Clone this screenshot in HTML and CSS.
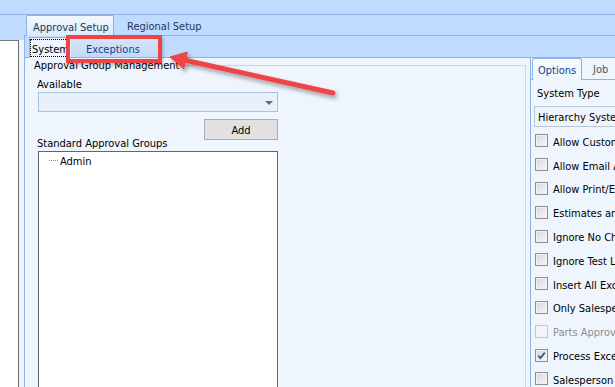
FILE: index.html
```html
<!DOCTYPE html>
<html lang="en">
<head>
    <meta charset="UTF-8">
    <meta name="viewport" content="width=device-width, initial-scale=1.0">
    <title>Approval Setup</title>
    <link rel="stylesheet" href="styles.css">
</head>
<body>
    <div class="topbar"></div>
    <div class="workspace">
        <div class="navside">
            <div class="navside-gap"></div>
            <div class="navside-body">
                <div class="navbox"></div>
            </div>
        </div>

        <div class="maintabs">
            <div class="tabstrip">
                <div class="tab tab-active">Approval Setup</div>
                <div class="tab">Regional Setup</div>
            </div>
            <div class="tabpage">
                <div class="subtabstrip">
                    <div class="subtab subtab-active"><span class="focus">System</span></div>
                    <div class="subtab subtab-hot">Exceptions</div>
                </div>
                <div class="pagebody">
                    <fieldset class="groupbox">
                        <legend>Approval Group Management</legend>
                        <div class="groupbody">
                            <div class="label label-first">Available</div>
                            <div class="combo">
                                <span class="combo-arrow"></span>
                            </div>
                            <div class="addrow">
                                <div class="label label-groups">Standard Approval Groups</div>
                                <button class="btn">Add</button>
                            </div>
                            <div class="listbox">
                                <div class="treeitem"><span class="treeline"></span>Admin</div>
                            </div>
                        </div>
                    </fieldset>

                    <div class="sidetabs">
                        <div class="sidestrip">
                            <div class="sidetab sidetab-active">Options</div>
                            <div class="sidetab">Job</div>
                        </div>
                        <div class="sidepage">
                            <div class="label side-label">System Type</div>
                            <div class="combo side-combo">Hierarchy System</div>
                            <div class="checklist">
                                <div class="check"><span class="box"></span><span class="check-text">Allow Customer Approval</span></div>
                                <div class="check"><span class="box"></span><span class="check-text">Allow Email Approval</span></div>
                                <div class="check"><span class="box"></span><span class="check-text">Allow Print/Email Before Approval</span></div>
                                <div class="check"><span class="box"></span><span class="check-text">Estimates and Quotes</span></div>
                                <div class="check"><span class="box"></span><span class="check-text">Ignore No Charge Lines</span></div>
                                <div class="check"><span class="box"></span><span class="check-text">Ignore Test Lines</span></div>
                                <div class="check"><span class="box"></span><span class="check-text">Insert All Exceptions</span></div>
                                <div class="check"><span class="box"></span><span class="check-text">Only Salesperson Approval</span></div>
                                <div class="check check-disabled"><span class="box"></span><span class="check-text">Parts Approval</span></div>
                                <div class="check"><span class="box"><svg viewBox="0 0 11 11" width="11" height="11"><path d="M2.2 5.6 L4.4 8 L8.8 2.6" fill="none" stroke="#42568c" stroke-width="1.8"/></svg></span><span class="check-text">Process Exceptions</span></div>
                                <div class="check"><span class="box"></span><span class="check-text">Salesperson Approval</span></div>
                            </div>
                        </div>
                    </div>
                </div>
            </div>
        </div>
    </div>

    <!-- annotation over the screenshot -->
    <div class="callout"></div>
    <svg class="arrow" width="615" height="387" viewBox="0 0 615 387">
        <defs>
            <filter id="shade" x="-20%" y="-50%" width="140%" height="200%">
                <feDropShadow dx="2" dy="3" stdDeviation="2" flood-color="#000" flood-opacity="0.35"/>
            </filter>
        </defs>
        <g filter="url(#shade)" fill="#ee4446" stroke="#ee4446">
            <line x1="333" y1="93" x2="184" y2="60" stroke-width="5" stroke-linecap="round"/>
            <polygon points="170,57 187.4,52 183.8,68.8" stroke-width="1" stroke-linejoin="round"/>
        </g>
    </svg>
</body>
</html>
```

FILE: styles.css
```css
body {
    margin: 0;
    width: 615px;
    height: 387px;
    overflow: hidden;
    position: relative;
    background-color: #bfdbff;
    font-family: "DejaVu Sans Condensed", "DejaVu Sans", sans-serif;
    font-size: 11px;
    line-height: 14px;
    color: #000;
}
.topbar {
    height: 14px;
    border-bottom: 1px solid #8db2e3;
}
.workspace {
    display: flex;
    height: 372px;
}

/* left navigation pane */
.navside {
    width: 24px;
    display: flex;
    flex-direction: column;
}
.navside-gap {
    height: 25px;
}
.navside-body {
    flex: 1;
    display: flex;
    background-color: #eff5fd;
}
.navbox {
    width: 18px;
    background: white;
    border-top: 1px solid #7a7a7a;
    border-right: 1px solid #6a6a6a;
}

/* main tabs */
.maintabs {
    flex: 1;
    display: flex;
    flex-direction: column;
    min-width: 0;
}
.tabstrip {
    height: 21px;
    border-bottom: 1px solid #8db2e3;
    display: flex;
    align-items: flex-end;
    padding-left: 2px;
}
.tab {
    height: 16px;
    padding: 4px 6px 0;
    line-height: 16px;
    color: #1e395b;
    white-space: nowrap;
}
.tab + .tab {
    margin-left: 7px;
}
.tab-active {
    width: 74px;
    margin-bottom: -1px;
    background: linear-gradient(#f3f8fe, #dbe9fa);
    border: 1px solid #8db2e3;
    border-bottom: none;
    border-radius: 2px 2px 0 0;
}
.tabpage {
    flex: 1;
    display: flex;
    flex-direction: column;
    border-left: 1px solid #8db2e3;
    background-color: #eff5fd;
}
.subtabstrip {
    height: 21px;
    border-bottom: 1px solid #8db2e3;
    background-color: #bfdbff;
    display: flex;
    align-items: flex-end;
    padding-left: 4px;
}
.subtab {
    white-space: nowrap;
}
.subtab-active {
    width: 38px;
    height: 19px;
    padding-top: 1px;
    margin-bottom: -1px;
    background-color: #eff5fd;
    border: 1px solid #8db2e3;
    border-bottom: none;
}
.focus {
    display: block;
    height: 13px;
    padding: 3px 0 0 1px;
    line-height: 14px;
    border: 1px dotted #000;
    overflow: hidden;
}
.subtab-hot {
    width: 72px;
    height: 15px;
    padding: 3px 0 0 15px;
    line-height: 15px;
    margin-left: 1px;
    color: #15428b;
    background: linear-gradient(#d3e4fa, #c3d9f7);
    border-left: 1px solid #e6effb;
}

/* page body */
.pagebody {
    flex: 1;
    display: flex;
    min-height: 0;
}
.groupbox {
    margin: -1px 0 0 6px;
    width: 492px;
    min-width: 0;
    padding: 0 0 0 2px;
    border: 1px solid #cfd6de;
    border-left: none;
    border-bottom: none;
    flex-shrink: 0;
}
.groupbox legend {
    padding: 2px 1px 0;
    line-height: 14px;
}
.groupbody {
    padding-left: 4px;
}
.label {
    white-space: nowrap;
}
.label-first {
    margin-top: 5px;
}
.combo {
    position: relative;
    margin: 0 0 0 1px;
    width: 238px;
    height: 18px;
    line-height: 18px;
    background-color: #e8f0fb;
    border: 1px solid #a9c2e2;
}
.combo-arrow {
    position: absolute;
    right: 4px;
    top: 8px;
    border-left: 4px solid transparent;
    border-right: 4px solid transparent;
    border-top: 4px solid #4d6c98;
}
.addrow {
    display: flex;
    align-items: flex-start;
    width: 241px;
    margin-top: 7px;
}
.label-groups {
    margin-top: 18px;
}
.btn {
    margin-left: auto;
    width: 74px;
    height: 21px;
    padding: 3px 0 0;
    font: inherit;
    color: #000;
    background-color: #e1e1e1;
    border: 1px solid #adadad;
}
.listbox {
    margin: 0 0 0 1px;
    width: 238px;
    height: 300px;
    background: white;
    border: 1px solid #666;
}
.treeitem {
    display: flex;
    align-items: center;
    margin-top: 3px;
    height: 14px;
}
.treeline {
    width: 9px;
    margin: 0 2px 4px 10px;
    border-top: 1px dotted #8a8a8a;
}

/* right-hand option tabs */
.sidetabs {
    margin-left: 4px;
    flex: 1;
    min-width: 0;
    overflow: hidden;
    display: flex;
    flex-direction: column;
}
.sidestrip {
    height: 21px;
    border-left: 1px solid #8db2e3;
    border-bottom: 1px solid #8db2e3;
    display: flex;
    align-items: flex-end;
    padding-left: 1px;
}
.sidetab {
    height: 18px;
    padding: 3px 5px 0;
    line-height: 18px;
    color: #555;
    white-space: nowrap;
}
.sidetab-active {
    width: 38px;
    margin-bottom: -1px;
    color: #15428b;
    background: linear-gradient(#f7fafe, #eef5fd);
    border: 1px solid #8db2e3;
    border-bottom: none;
    border-radius: 3px 3px 0 0;
}
.sidetab + .sidetab {
    margin-left: 6px;
}
.sidepage {
    flex: 1;
    border-left: 1px solid #8db2e3;
    background-color: #eff5fd;
    padding-left: 6px;
}
.side-label {
    margin-top: 7px;
}
.side-combo {
    margin: 5px 0 0 -3px;
    width: 200px;
    height: 17px;
    padding: 2px 0 0 3px;
    line-height: 17px;
    background-color: #eff4fb;
    border-color: #b7c6d9;
    white-space: nowrap;
}
.checklist {
    margin-top: 2px;
}
.check {
    display: flex;
    align-items: center;
    height: 23.8px;
    white-space: nowrap;
}
.check-text {
    padding-top: 4px;
}
.box {
    width: 11px;
    height: 11px;
    margin: 0 5px 0 -2px;
    border: 1px solid #8e8f8f;
    background: linear-gradient(135deg, #d6d6d6, #f7f7f7);
    box-shadow: inset 0 0 0 1px #f2f2f2;
    flex-shrink: 0;
}
.box svg {
    display: block;
}
.check-disabled {
    color: #8d8d8d;
}
.check-disabled .box {
    border-color: #c6c6c6;
    background: #f4f4f4;
    box-shadow: none;
}

/* red annotation */
.callout {
    position: absolute;
    left: 66px;
    top: 35px;
    width: 88px;
    height: 20px;
    border: 4px solid #ee4446;
    box-shadow: 1px 2px 3px rgba(0, 0, 0, 0.25);
}
.arrow {
    position: absolute;
    left: 0;
    top: 0;
    pointer-events: none;
}
```
